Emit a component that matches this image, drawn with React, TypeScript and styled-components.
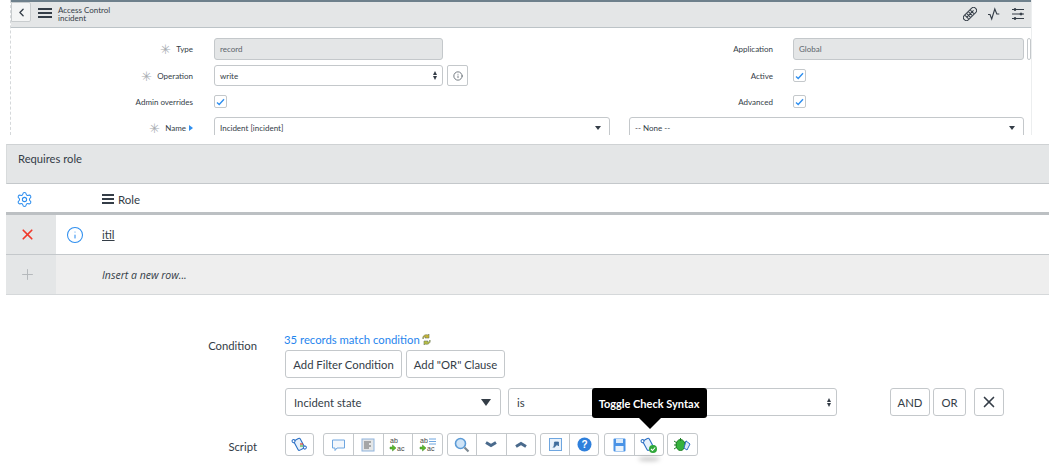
import React from "react";
import styled, { createGlobalStyle } from "styled-components";
import { Settings, Info, X, Plus, ChevronLeft } from "lucide-react";

const GlobalStyle = createGlobalStyle`
  html, body { margin: 0; padding: 0; background: #fff; }
  body { font-family: "Lato", "Open Sans", "Liberation Sans", sans-serif; color: #343d47; }
`;

const Page = styled.div`
  width: 1049px;
  height: 474px;
  overflow: hidden;
  position: relative;
`;

const TopFrame = styled.div`
  width: 1022px;
  height: 135px;
  margin-left: 10px;
  overflow: hidden;
  border-left: 1px dashed #d5d8da;
  border-right: 1px solid #eceeef;
  box-sizing: border-box;
`;

const Header = styled.div`
  height: 28px;
  box-sizing: border-box;
  background: #e4e6e7;
  border-top: 2px solid #6e808c;
  border-bottom: 1px solid #bcc3c7;
  display: flex;
  align-items: center;
  padding-right: 6px;
`;

const BackButton = styled.div`
  width: 20px;
  height: 20px;
  margin-top: -5px;
  box-sizing: border-box;
  background: #f4f5f5;
  border: 1px solid #c8ccce;
  border-radius: 0 2px 2px 0;
  display: flex;
  align-items: center;
  justify-content: center;
`;

const Burger = styled.div`
  width: 14px;
  height: 10px;
  margin: -3px 6px 0 7px;
  border-top: 2px solid #343d47;
  border-bottom: 2px solid #343d47;
  position: relative;
  box-sizing: border-box;
  &::after {
    content: "";
    position: absolute;
    left: 0;
    right: 0;
    top: 2px;
    height: 2px;
    background: #343d47;
  }
`;

const HeaderTitle = styled.div`
  font-size: 8px;
  line-height: 8.5px;
  margin-top: -1px;
`;

const HeaderIcons = styled.div`
  margin-left: auto;
  display: flex;
  align-items: center;
  gap: 10px;
  margin-top: -2px;
`;

const Form = styled.div`
  display: grid;
  grid-template-columns: 182px 21px 229px 4px 21px 142px 19px 144px 20px 231px 3px 4px;
  grid-template-rows: 22px 21px 21px 22px;
  row-gap: 5px;
  padding-top: 10px;
  align-items: center;
`;

const Label = styled.div<{ $col: number }>`
  grid-column: ${(p) => p.$col};
  font-size: 8px;
  text-align: right;
  white-space: nowrap;
`;

const Star = styled.span`
  color: #a9aeb2;
  font-size: 13px;
  line-height: 8px;
  margin-right: 5px;
  vertical-align: -2px;
`;

const Arrow = styled.span`
  display: inline-block;
  margin-left: 3px;
  border-left: 4px solid #2f8fef;
  border-top: 3px solid transparent;
  border-bottom: 3px solid transparent;
`;

const Field = styled.div<{ $readOnly?: boolean; $col: string }>`
  grid-column: ${(p) => p.$col};
  height: 100%;
  box-sizing: border-box;
  background: ${(p) => (p.$readOnly ? "#e4e6e7" : "#fff")};
  border: 1px solid #c4c8cb;
  border-radius: 3px;
  font-size: 8px;
  padding: 0 5px;
  display: flex;
  align-items: center;
  justify-content: space-between;
  color: ${(p) => (p.$readOnly ? "#5b646c" : "#343d47")};
`;

const Check = styled.div<{ $col: number }>`
  grid-column: ${(p) => p.$col};
  width: 13px;
  height: 13px;
  box-sizing: border-box;
  border: 1px solid #c4c8cb;
  border-radius: 2px;
  display: flex;
  align-items: center;
  justify-content: center;
`;

const SmallButton = styled.div<{ $col: string }>`
  grid-column: ${(p) => p.$col};
  height: 100%;
  box-sizing: border-box;
  border: 1px solid #c4c8cb;
  border-radius: 2px;
  background: #fff;
  display: flex;
  align-items: center;
  justify-content: center;
`;

const Section = styled.div`
  margin: 9px 0 0 6px;
`;

const SectionBar = styled.div`
  height: 40px;
  box-sizing: border-box;
  background: #e4e6e7;
  border-top: 1px solid #cfd2d4;
  border-left: 1px solid #d8dbdc;
  border-bottom: 1px solid #c4c8cb;
  padding: 7px 0 0 11px;
  font-size: 11.2px;
`;

const TableRow = styled.div<{ $height: number; $border: string; $bg?: string; $top?: number }>`
  display: flex;
  height: ${(p) => p.$height}px;
  box-sizing: border-box;
  align-items: stretch;
  padding-top: ${(p) => p.$top ?? 0}px;
  border-bottom: ${(p) => p.$border};
  background: ${(p) => p.$bg ?? "#fff"};
`;

const ActionCell = styled.div<{ $bg?: string; $pad?: number }>`
  width: 50px;
  background: ${(p) => p.$bg ?? "transparent"};
  display: flex;
  align-items: center;
  justify-content: center;
  padding-right: ${(p) => p.$pad ?? 8}px;
  box-sizing: border-box;
`;

const InfoCell = styled.div`
  width: 46px;
  display: flex;
  align-items: center;
  justify-content: center;
  padding-right: 8px;
  box-sizing: border-box;
`;

const DataCell = styled.div`
  display: flex;
  align-items: center;
  gap: 4px;
  font-size: 11.5px;
`;

const SmallBurger = styled(Burger)`
  width: 12px;
  height: 10px;
  margin: 0;
`;

const ItalicText = styled.span`
  font-family: "Open Sans", "Liberation Sans", sans-serif;
  font-style: italic;
  font-size: 10.5px;
  font-weight: 400;
`;

const Underlined = styled.span`
  text-decoration: underline;
`;

const Condition = styled.div`
  display: grid;
  grid-template-columns: 285px 1fr;
  margin-top: 34px;
  font-size: 11.3px;
`;

const RowLabel = styled.div<{ $top: number }>`
  padding-right: 28px;
  padding-top: ${(p) => p.$top}px;
  text-align: right;
`;

const ConditionBody = styled.div``;

const MatchLink = styled.div`
  height: 21px;
  color: #1f85ee;
  display: flex;
  align-items: center;
  gap: 1px;
  margin-left: -1px;
`;

const ButtonRow = styled.div<{ $gap: number }>`
  display: flex;
  gap: ${(p) => p.$gap}px;
`;

const Button = styled.div<{ $width: number }>`
  width: ${(p) => p.$width}px;
  height: 28px;
  box-sizing: border-box;
  background: #fff;
  border: 1px solid #c4c8cb;
  border-radius: 3px;
  display: flex;
  align-items: center;
  justify-content: center;
  white-space: nowrap;
`;

const RemoveButton = styled(Button)`
  margin-left: 8px;
`;

const FilterRow = styled.div`
  display: flex;
  margin-top: 10px;
  height: 28px;
`;

const SelectBox = styled.div<{ $width: number; $gap: number }>`
  width: ${(p) => p.$width}px;
  margin-right: ${(p) => p.$gap}px;
  box-sizing: border-box;
  border: 1px solid #c4c8cb;
  border-radius: 3px;
  padding: 0 5px 0 8px;
  display: flex;
  align-items: center;
  justify-content: space-between;
`;

const Caret = styled.span`
  width: 0;
  height: 0;
  margin-right: 4px;
  border-left: 5px solid transparent;
  border-right: 5px solid transparent;
  border-top: 7px solid #343d47;
`;

const SmallCaret = styled(Caret)`
  border-left-width: 3px;
  border-right-width: 3px;
  border-top-width: 4px;
  margin-right: 3px;
`;

const Spinner = styled.span`
  display: flex;
  flex-direction: column;
  gap: 1px;
  &::before,
  &::after {
    content: "";
    width: 0;
    height: 0;
    border-left: 2.5px solid transparent;
    border-right: 2.5px solid transparent;
  }
  &::before {
    border-bottom: 4px solid #343d47;
  }
  &::after {
    border-top: 4px solid #343d47;
  }
`;

const ScriptRow = styled.div`
  display: grid;
  grid-template-columns: 285px 1fr;
  margin-top: 17px;
  font-size: 11.3px;
`;

const Toolbar = styled.div`
  display: flex;
  height: 23px;
`;

const ToolGroup = styled.div<{ $left: number; $width: number }>`
  display: flex;
  width: ${(p) => p.$width}px;
  margin-left: ${(p) => p.$left}px;
  border: 1px solid #c4c8cb;
  border-radius: 3px;
  box-sizing: border-box;
  height: 23px;
`;

const ToolButton = styled.div`
  flex: 1;
  position: relative;
  display: flex;
  align-items: center;
  justify-content: center;
  box-sizing: border-box;
  & + & {
    border-left: 1px solid #c4c8cb;
  }
`;

const Shadow = styled.div`
  position: absolute;
  left: 3px;
  right: 3px;
  bottom: -6px;
  height: 4px;
  border-radius: 50%;
  background: rgba(0, 0, 0, 0.22);
  filter: blur(2px);
`;

const Tooltip = styled.div`
  position: absolute;
  left: -43px;
  top: -46px;
  width: 115px;
  height: 30px;
  background: #000;
  color: #fff;
  border-radius: 3px;
  font-size: 11px;
  font-weight: 700;
  display: flex;
  align-items: center;
  justify-content: center;
  white-space: nowrap;
  &::after {
    content: "";
    position: absolute;
    left: 46px;
    bottom: -11px;
    border-left: 12px solid transparent;
    border-right: 12px solid transparent;
    border-top: 12px solid #000;
  }
`;

const B = "#2f8fef";

const ClipIcon = () => (
  <svg width="14" height="14" viewBox="0 0 14 14" fill="none" stroke="#343d47" strokeWidth="1">
    <g transform="rotate(45 7 7)">
      <rect x="4" y="-1" width="6" height="16" rx="3" />
      <path d="M7 2v10M4.500 4h5M4.500 6.500h5M4.500 9h5M4.500 11.500h5" />
    </g>
  </svg>
);

const ActivityIcon = () => (
  <svg width="14" height="14" viewBox="0 0 14 14" fill="none" stroke="#343d47" strokeWidth="1.100">
    <path d="M1 7.500h2l1.700 4.500L7.800 2l2 5h2.500" />
  </svg>
);

const SlidersIcon = () => (
  <svg width="14" height="14" viewBox="0 0 14 14" fill="#343d47" stroke="#343d47" strokeWidth="1">
    <path d="M1 2.500h12M1 7h12M1 11.500h12" />
    <circle cx="4" cy="2.500" r="1" />
    <circle cx="10" cy="7" r="1" />
    <circle cx="4" cy="11.500" r="1" />
  </svg>
);

const TickIcon = () => (
  <svg width="9" height="8" viewBox="0 0 9 8" fill="none" stroke={B} strokeWidth="1.400">
    <path d="M1 4.500l2.200 2L8 1.200" />
  </svg>
);

const RefreshIcon = () => (
  <svg width="11" height="13" viewBox="0 0 11 13">
    <path d="M2 6c-1-3 2-5 5-4l1-1v4H4l1-1c-1-.5-2 0-3 2z" fill="#c9b530" stroke="#6d7a5d" strokeWidth=".6" />
    <path d="M9 7c1 3-2 5-5 4l-1 1V8h4l-1 1c1 .5 2 0 3-2z" fill="#b9c040" stroke="#6d7a5d" strokeWidth=".6" />
  </svg>
);

const ScrollShape = () => (
  <g transform="rotate(-28 9 9)">
    <rect x="6" y="3" width="7" height="11" rx="1.500" fill="#e6f0fb" stroke="#2b6fc4" strokeWidth="1.100" />
    <circle cx="6" cy="3" r="1.500" fill="#fff" stroke="#2b6fc4" />
    <circle cx="13" cy="14" r="1.500" fill="#fff" stroke="#2b6fc4" />
  </g>
);

const ScriptIcon = ({ badge }: { badge?: "rainbow" | "check" }) => (
  <svg width="20" height="18" viewBox="0 0 20 18" fill="none">
    <ScrollShape />
    {badge === "rainbow" && <path d="M10 8h3" stroke="#e0402a" strokeWidth="1.200" />}
    {badge === "rainbow" && <path d="M10 10h3" stroke="#55b13a" strokeWidth="1.200" />}
    {badge === "check" && <circle cx="14" cy="13" r="4" fill="#2fa83a" />}
    {badge === "check" && <path d="M12 13l1.500 1.500L16.200 11.500" stroke="#fff" strokeWidth="1.100" />}
  </svg>
);

const CommentIcon = () => (
  <svg width="15" height="14" viewBox="0 0 15 14" fill="#f3f7fc" stroke="#6ea6e0" strokeWidth="1">
    <path d="M1.500 2h12v8H6l-2 2.500V10H1.500z" />
  </svg>
);

const FormatIcon = () => (
  <svg width="14" height="14" viewBox="0 0 14 14" fill="#e4e6e7" stroke="#8fb4dd" strokeWidth="1">
    <rect x="1" y="1" width="12" height="12" />
    <path d="M3 4h7M3 6h5M3 8h7M3 10h5" stroke="#666" />
  </svg>
);

const ReplaceIcon = ({ all }: { all?: boolean }) => (
  <svg width="18" height="16" viewBox="0 0 18 16" fontFamily="Liberation Sans, sans-serif" fontSize="7" fill="#444">
    <text x="1" y="6">ab</text>
    <path d="M1 10h2.500V8L7 11l-3.500 3v-2H1z" fill="#5cb82e" stroke="#3d8a1c" strokeWidth=".5" />
    <text x="8" y="14">ac</text>
    {all && <path d="M10 2h7M10 4.500h7M10 7h7" stroke="#6ea6e0" strokeWidth="1" />}
  </svg>
);

const SearchIcon = () => (
  <svg width="16" height="16" viewBox="0 0 16 16">
    <circle cx="6.500" cy="6.500" r="5" fill="#cfe4f7" stroke="#5c9bd6" strokeWidth="1.600" />
    <path d="M10.500 10.500l4 4" stroke="#7b8791" strokeWidth="2.200" />
  </svg>
);

const ChevronIcon = ({ up }: { up?: boolean }) => (
  <svg width="12" height="9" viewBox="0 0 12 9" fill="none" stroke="#4a6a8c" strokeWidth="3">
    <path d={up ? "M1 6.500L6 3.500l5 3" : "M1 2.500L6 5.500l5-3"} />
  </svg>
);

const ExpandIcon = () => (
  <svg width="13" height="13" viewBox="0 0 13 13" fill="#eaf2fb" stroke="#6ea6e0">
    <rect x=".5" y=".5" width="12" height="12" />
    <path d="M4 9.500L9 4.500M5.500 4h4v4L8 6.500 5 9.500z" fill="#3f6c9c" stroke="#3f6c9c" strokeWidth=".8" />
  </svg>
);

const HelpIcon = () => (
  <svg width="15" height="15" viewBox="0 0 15 15">
    <circle cx="7.500" cy="7.500" r="7" fill="#2f80dc" />
    <text x="7.500" y="11" textAnchor="middle" fontSize="10" fontWeight="700" fill="#fff" fontFamily="Liberation Sans, sans-serif">?</text>
  </svg>
);

const SaveIcon = () => (
  <svg width="13" height="14" viewBox="0 0 13 14">
    <rect x=".5" y=".5" width="12" height="13" rx="1" fill="#4a93e6" />
    <rect x="3" y="1" width="7" height="4" fill="#dcebfa" />
    <rect x="2.500" y="8" width="8" height="5" fill="#eaf3fc" />
  </svg>
);

const BugIcon = () => (
  <svg width="20" height="16" viewBox="0 0 20 16" fill="none">
    <ellipse cx="7.500" cy="8" rx="4.500" ry="5.500" fill="#35b23c" stroke="#1e7f26" />
    <path d="M1 4l3 2M1 8h3M1 12l3-2M14 4l-3 2M7.500 1v3" stroke="#1e7f26" />
    <path d="M13 4l4 3-3 6-3-2z" fill="#dce9f8" stroke="#2b6fc4" />
  </svg>
);

function App(): JSX.Element {
  return (
    <Page>
      <GlobalStyle />
      <TopFrame>
        <Header>
          <BackButton>
            <ChevronLeft size={13} color="#343d47" strokeWidth={2.4} />
          </BackButton>
          <Burger />
          <HeaderTitle>
            Access Control
            <br />
            incident
          </HeaderTitle>
          <HeaderIcons>
            <ClipIcon />
            <ActivityIcon />
            <SlidersIcon />
          </HeaderIcons>
        </Header>
        <Form>
          <Label $col={1}><Star>✳</Star>Type</Label>
          <Field $col="3" $readOnly>record</Field>
          <Label $col={8}>Application</Label>
          <Field $col="10" $readOnly>Global</Field>
          <SmallButton $col="12" />

          <Label $col={1}><Star>✳</Star>Operation</Label>
          <Field $col="3">write<Spinner /></Field>
          <SmallButton $col="5"><Info size={10} color="#5b646c" /></SmallButton>
          <Label $col={8}>Active</Label>
          <Check $col={10}><TickIcon /></Check>

          <Label $col={1}>Admin overrides</Label>
          <Check $col={3}><TickIcon /></Check>
          <Label $col={8}>Advanced</Label>
          <Check $col={10}><TickIcon /></Check>

          <Label $col={1}><Star>✳</Star>Name<Arrow /></Label>
          <Field $col="3 / span 4">Incident [incident]<SmallCaret /></Field>
          <Field $col="8 / span 3">-- None --<SmallCaret /></Field>
        </Form>
      </TopFrame>

      <Section>
        <SectionBar>Requires role</SectionBar>
        <TableRow $height={31} $border="3px solid #bcc0c3" $top={2}>
          <ActionCell $pad={14}><Settings size={17} color={B} strokeWidth={1.5} /></ActionCell>
          <InfoCell />
          <DataCell><SmallBurger />Role</DataCell>
        </TableRow>
        <TableRow $height={40} $border="1px solid #c4c8cb">
          <ActionCell $bg="#e4e6e7"><X size={17} color="#f0392b" strokeWidth={2.4} /></ActionCell>
          <InfoCell><Info size={18} color={B} strokeWidth={1.4} /></InfoCell>
          <DataCell><Underlined>itil</Underlined></DataCell>
        </TableRow>
        <TableRow $height={40} $border="1px solid #d5d8da" $bg="#eeeeee">
          <ActionCell $bg="#e4e6e7"><Plus size={17} color="#b4b8bb" strokeWidth={1.4} /></ActionCell>
          <InfoCell />
          <DataCell><ItalicText>Insert a new row...</ItalicText></DataCell>
        </TableRow>
      </Section>

      <Condition>
        <RowLabel $top={10}>Condition</RowLabel>
        <ConditionBody>
          <MatchLink>35 records match condition<RefreshIcon /></MatchLink>
          <ButtonRow $gap={4}>
            <Button $width={117}>Add Filter Condition</Button>
            <Button $width={99}>Add "OR" Clause</Button>
          </ButtonRow>
          <FilterRow>
            <SelectBox $width={216} $gap={7}>Incident state<Caret /></SelectBox>
            <SelectBox $width={329} $gap={53}>is<Spinner /></SelectBox>
            <ButtonRow $gap={3}>
              <Button $width={40}>AND</Button>
              <Button $width={33}>OR</Button>
            </ButtonRow>
            <RemoveButton $width={30}><X size={18} color="#343d47" strokeWidth={2.2} /></RemoveButton>
          </FilterRow>
        </ConditionBody>
      </Condition>

      <ScriptRow>
        <RowLabel $top={7}>Script</RowLabel>
        <Toolbar>
          <ToolGroup $left={0} $width={29}><ToolButton><ScriptIcon badge="rainbow" /></ToolButton></ToolGroup>
          <ToolGroup $left={9} $width={120}>
            <ToolButton><CommentIcon /></ToolButton>
            <ToolButton><FormatIcon /></ToolButton>
            <ToolButton><ReplaceIcon /></ToolButton>
            <ToolButton><ReplaceIcon all /></ToolButton>
          </ToolGroup>
          <ToolGroup $left={4} $width={89}>
            <ToolButton><SearchIcon /></ToolButton>
            <ToolButton><ChevronIcon /></ToolButton>
            <ToolButton><ChevronIcon up /></ToolButton>
          </ToolGroup>
          <ToolGroup $left={4} $width={59}>
            <ToolButton><ExpandIcon /></ToolButton>
            <ToolButton><HelpIcon /></ToolButton>
          </ToolGroup>
          <ToolGroup $left={5} $width={60}>
            <ToolButton><SaveIcon /></ToolButton>
            <ToolButton>
              <ScriptIcon badge="check" />
              <Shadow />
              <Tooltip>Toggle Check Syntax</Tooltip>
            </ToolButton>
          </ToolGroup>
          <ToolGroup $left={3} $width={31}><ToolButton><BugIcon /></ToolButton></ToolGroup>
        </Toolbar>
      </ScriptRow>
    </Page>
  );
}

export default App;
